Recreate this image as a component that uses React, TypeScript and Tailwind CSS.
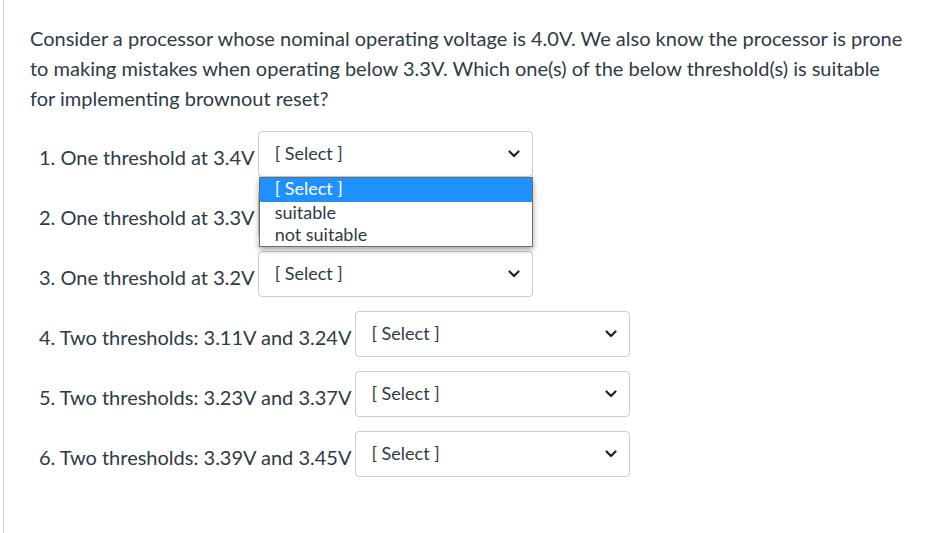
import React from 'react';

const ROWS = [
  '1. One threshold at 3.4V',
  '2. One threshold at 3.3V',
  '3. One threshold at 3.2V',
  '4. Two thresholds: 3.11V and 3.24V',
  '5. Two thresholds: 3.23V and 3.37V',
  '6. Two thresholds: 3.39V and 3.45V',
];

const OPTIONS = ['[ Select ]', 'suitable', 'not suitable'];

function Chevron() {
  return (
    <svg width="12" height="8" viewBox="0 0 12 8" className="shrink-0">
      <path d="M1.5 1.5 L6 6 L10.5 1.5" fill="none" stroke="#222" strokeWidth="2.2" strokeLinecap="round" strokeLinejoin="round" />
    </svg>
  );
}

function FakeSelect({ open }: { open?: boolean }) {
  return (
    <div className="relative -mt-[6px]">
      <div className="flex h-[46px] w-[275px] items-center justify-between rounded-[4px] border border-[#c7cdd1] bg-white pl-[16px] pr-[12px] text-[18px] text-[#2d3b45]">
        <span className="-mt-[2px]">[ Select ]</span>
        <Chevron />
      </div>
      {open && (
        <ul className="absolute left-px top-[46px] z-10 w-[274px] border border-[#6e6e6e] bg-white text-[18px] leading-[22px] text-[#2d3b45] shadow-[0_3px_6px_rgba(0,0,0,0.35)]">
          {OPTIONS.map((o, i) => (
            <li
              key={o}
              className={
                i === 0
                  ? 'h-[24px] bg-[#1e90ff] pl-[15px] leading-[21px] text-white'
                  : 'h-[22px] pl-[15px] leading-[20px]'
              }
            >
              {o}
            </li>
          ))}
        </ul>
      )}
    </div>
  );
}

export default function App() {
  return (
    <div
      className="min-h-[533px] w-[927px] bg-white text-[#2d3b45]"
      style={{ fontFamily: 'Lato, "Noto Sans", sans-serif' }}
    >
      <div className="ml-[3px] min-h-[533px] border-l border-[#c7cdd1] pl-[26px] pt-[23px]">
        <p className="w-[876px] text-[20px] leading-[30px]">
          Consider a processor whose nominal operating voltage is 4.0V. We also know the processor is prone to making
          mistakes when operating below 3.3V. Which one(s) of the below threshold(s) is suitable for implementing
          brownout reset?
        </p>
        <div className="mt-[14px] pl-[9px]">
          {ROWS.map((label, i) => (
            <div key={label} className="flex h-[60px] items-center gap-[3px] text-[20px]">
              <span>{label}</span>
              <FakeSelect open={i === 0} />
            </div>
          ))}
        </div>
      </div>
    </div>
  );
}
